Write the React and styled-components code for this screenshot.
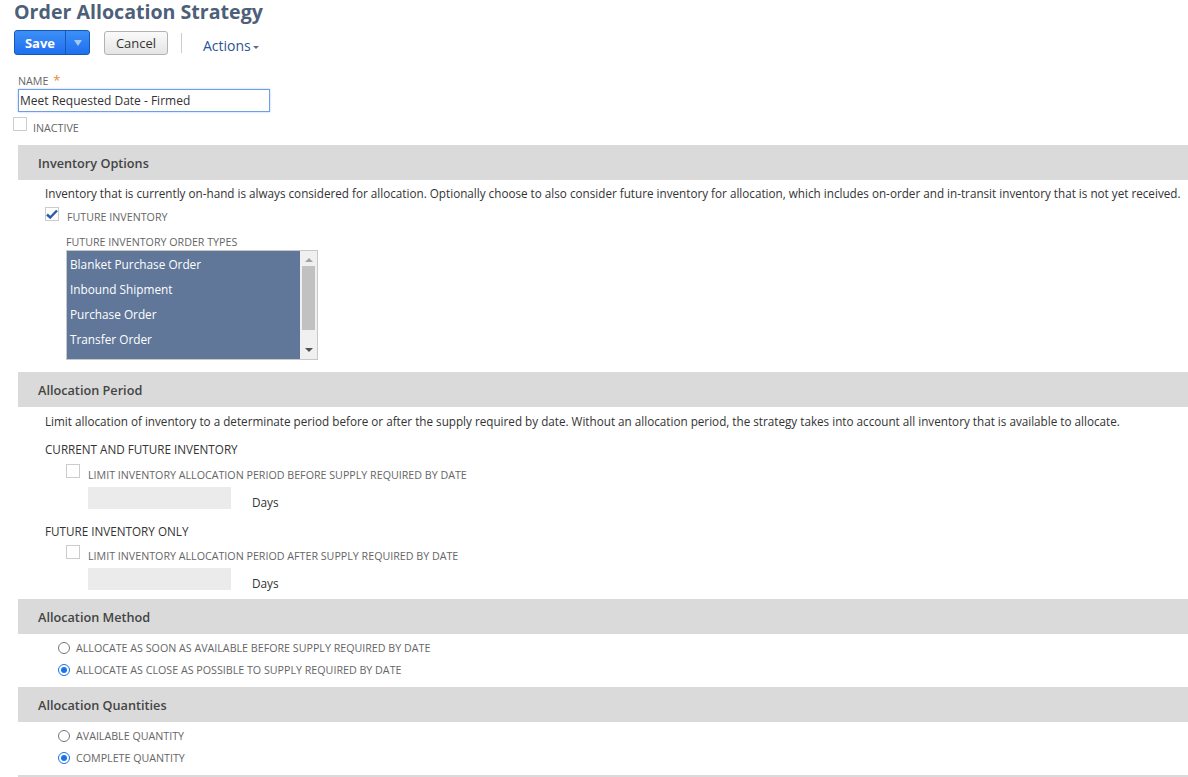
import React from "react"
import styled, { createGlobalStyle } from "styled-components"

const GlobalStyle = createGlobalStyle`
  html, body {
    margin: 0;
    padding: 0;
    background: #fff;
    font-family: "Open Sans", "Liberation Sans", sans-serif;
    color: #333;
  }
`

const Page = styled.div`
  padding: 0 0 0 14px;
  width: 1174px;
  overflow: hidden;
`

const Title = styled.h1`
  margin: 0;
  font-size: 19.6px;
  line-height: 24px;
  font-weight: 700;
  color: #4d5f79;
`

const Toolbar = styled.div`
  display: flex;
  align-items: center;
  margin-top: 6px;
  height: 25px;
`

const SplitButton = styled.div`
  display: flex;
  height: 25px;
  border: 1px solid #125ab2;
  border-radius: 3px;
  overflow: hidden;
  background: linear-gradient(#3d8ff7, #1f6ff0);
  box-sizing: border-box;
`

const SaveLabel = styled.button`
  border: 0;
  background: transparent;
  color: #fff;
  font-family: inherit;
  font-weight: 700;
  font-size: 13px;
  width: 51px;
  padding: 0;
  border-right: 1px solid #1559b8;
`

const Caret = styled.span`
  width: 23px;
  display: flex;
  align-items: center;
  justify-content: center;
`

const CaretShape = styled.span`
  width: 0;
  height: 0;
  border-left: 4px solid transparent;
  border-right: 4px solid transparent;
  border-top: 6px solid #a9c6f3;
`

const CancelButton = styled.button`
  margin-left: 14px;
  height: 24px;
  width: 64px;
  border: 1px solid #b2b2b2;
  border-radius: 3px;
  background: linear-gradient(#fafafa, #e5e5e5);
  font-family: inherit;
  font-size: 13px;
  color: #333;
  padding: 0;
`

const Divider = styled.span`
  width: 1px;
  height: 20px;
  background: #ccc;
  margin: 0 21px 0 13px;
`

const Actions = styled.span`
  color: #2b5594;
  font-size: 14px;
  margin-top: 6px;
  display: flex;
  align-items: center;
  gap: 2px;
`

const SmallCaret = styled.span`
  width: 0;
  height: 0;
  border-left: 3px solid transparent;
  border-right: 3px solid transparent;
  border-top: 3px solid #5a6f8f;
  margin-top: 3px;
`

const NameField = styled.div`
  margin: 18px 0 0 4px;
`

const FieldLabel = styled.div`
  font-size: 10.7px;
  color: #666;
  line-height: 14px;
  text-transform: uppercase;
`

const Required = styled.span`
  color: #e88a2e;
  margin-left: 5px;
  font-size: 13px;
`

const TextInput = styled.input`
  display: block;
  width: 252px;
  height: 23px;
  box-sizing: border-box;
  border: 1px solid #6d9ee8;
  box-shadow: 0 0 2px #a7c6f2;
  font-family: inherit;
  font-size: 12px;
  color: #333;
  padding: 0 1px;
  margin-top: 1px;
  outline: none;
`

const CheckRow = styled.label`
  display: flex;
  align-items: flex-start;
  gap: ${p => p.$gap || 8}px;
  margin: ${p => p.$margin || "0"};
  font-size: 10.7px;
  color: #666;
  line-height: 14px;
  text-transform: uppercase;
`

const Box = styled.span`
  width: 14px;
  height: 14px;
  box-sizing: border-box;
  border: 1px solid #ccc;
  background: #fff;
  display: flex;
  align-items: center;
  justify-content: center;
  flex-shrink: 0;
`

const BoxLabel = styled.span`
  padding-top: ${p => p.$pt || 4}px;
`

const Section = styled.section`
  margin-left: 4px;
  margin-top: ${p => p.$mt || 0}px;
`

const SectionHeader = styled.div`
  background: #dadada;
  height: 35px;
  display: flex;
  align-items: center;
  padding-left: 20px;
  font-size: 12.7px;
  font-weight: 600;
  color: #444;
`

const SectionBody = styled.div`
  padding: ${p => p.$pt ?? 5}px 0 0 27px;
`

const Description = styled.p`
  margin: 0;
  font-size: 11.7px;
  line-height: 16px;
  color: #333;
  white-space: nowrap;
`

const SubHeading = styled.div`
  font-size: 11.7px;
  color: #333;
  text-transform: uppercase;
  line-height: 16px;
  margin-top: ${p => p.$mt || 0}px;
`

const Indent = styled.div`
  margin-left: 21px;
`

const ListLabel = styled(FieldLabel)`
  margin-top: 11px;
`

const ListBox = styled.div`
  display: flex;
  width: 252px;
  height: 110px;
  box-sizing: border-box;
  border: 1px solid #c8c8c8;
  margin-top: 1px;
`

const ListItems = styled.ul`
  list-style: none;
  margin: 0;
  padding: 1px 0 0 0;
  flex: 1;
  background: #607799;
`

const ListItem = styled.li`
  color: #fff;
  font-size: 11.8px;
  height: 25px;
  line-height: 25px;
  padding-left: 3px;
`

const Scrollbar = styled.div`
  width: 17px;
  background: #f0f0f0;
  display: flex;
  flex-direction: column;
  align-items: center;
`

const ScrollArrow = styled.span`
  width: 0;
  height: 0;
  border-left: 4px solid transparent;
  border-right: 4px solid transparent;
  ${p => p.$up
    ? "border-bottom: 4px solid #a3a3a3; margin: 7px 0 4px;"
    : "border-top: 4px solid #505050; margin: auto 0 7px;"}
`

const Thumb = styled.span`
  width: 13px;
  height: 64px;
  background: #c1c1c1;
`

const DaysRow = styled.div`
  display: flex;
  align-items: flex-end;
  gap: 21px;
  margin: 5px 0 0 22px;
  font-size: 11.8px;
  color: #333;
`

const DaysInput = styled.div`
  width: 143px;
  height: 22px;
  background: #ebebeb;
`

const DaysText = styled.span`
  line-height: 16px;
  margin-bottom: -1px;
`

const RadioRow = styled.label`
  display: flex;
  align-items: center;
  gap: 6px;
  margin: ${p => (p.$first ? "1px" : "6px")} 0 0 13px;
  font-size: 10.7px;
  color: #666;
  line-height: 16px;
  text-transform: uppercase;
`

const Radio = styled.span`
  width: 12px;
  height: 12px;
  box-sizing: border-box;
  border-radius: 50%;
  border: 1px solid ${p => (p.$on ? "#1a73e8" : "#767676")};
  display: flex;
  align-items: center;
  justify-content: center;
  background: #fff;

  &::after {
    content: "";
    width: 6px;
    height: 6px;
    border-radius: 50%;
    background: ${p => (p.$on ? "#1a73e8" : "transparent")};
  }
`

const BottomRule = styled.div`
  height: 2px;
  background: #dadada;
  margin-top: 9px;
`

const Check = () => (
  <svg width="12" height="10" viewBox="0 0 12 10">
    <path d="M1 5.5 L4.2 8.5 L11 1.5" fill="none" stroke="#2b5aa8" strokeWidth="2.4" />
  </svg>
)

const orderTypes = ["Blanket Purchase Order", "Inbound Shipment", "Purchase Order", "Transfer Order"]

export default function App() {
  return (
    <Page>
      <GlobalStyle />
      <Title>Order Allocation Strategy</Title>
      <Toolbar>
        <SplitButton>
          <SaveLabel>Save</SaveLabel>
          <Caret>
            <CaretShape />
          </Caret>
        </SplitButton>
        <CancelButton>Cancel</CancelButton>
        <Divider />
        <Actions>
          Actions <SmallCaret />
        </Actions>
      </Toolbar>

      <NameField>
        <FieldLabel>
          Name<Required>*</Required>
        </FieldLabel>
        <TextInput defaultValue="Meet Requested Date - Firmed" />
      </NameField>
      <CheckRow $gap={6} $margin="5px 0 0 -1px">
        <Box />
        <BoxLabel $pt={4}>Inactive</BoxLabel>
      </CheckRow>

      <Section $mt={10}>
        <SectionHeader>Inventory Options</SectionHeader>
        <SectionBody>
          <Description>
            Inventory that is currently on-hand is always considered for allocation. Optionally choose to also consider future inventory for allocation, which includes on-order and in-transit inventory that is not yet received.
          </Description>
          <CheckRow $margin="6px 0 0 0">
            <Box>
              <Check />
            </Box>
            <BoxLabel $pt={3}>Future Inventory</BoxLabel>
          </CheckRow>
          <Indent>
            <ListLabel>Future Inventory Order Types</ListLabel>
            <ListBox>
              <ListItems>
                {orderTypes.map(t => (
                  <ListItem key={t}>{t}</ListItem>
                ))}
              </ListItems>
              <Scrollbar>
                <ScrollArrow $up />
                <Thumb />
                <ScrollArrow />
              </Scrollbar>
            </ListBox>
          </Indent>
        </SectionBody>
      </Section>

      <Section $mt={12}>
        <SectionHeader>Allocation Period</SectionHeader>
        <SectionBody $pt={6}>
          <Description>
            Limit allocation of inventory to a determinate period before or after the supply required by date. Without an allocation period, the strategy takes into account all inventory that is available to allocate.
          </Description>
          <SubHeading $mt={12}>Current and Future Inventory</SubHeading>
          <Indent>
            <CheckRow $margin="7px 0 0 0">
              <Box />
              <BoxLabel $pt={4}>Limit Inventory Allocation Period Before Supply Required By Date</BoxLabel>
            </CheckRow>
            <DaysRow>
              <DaysInput />
              <DaysText>Days</DaysText>
            </DaysRow>
          </Indent>
          <SubHeading $mt={14}>Future Inventory Only</SubHeading>
          <Indent>
            <CheckRow $margin="6px 0 0 0">
              <Box />
              <BoxLabel $pt={4}>Limit Inventory Allocation Period After Supply Required By Date</BoxLabel>
            </CheckRow>
            <DaysRow>
              <DaysInput />
              <DaysText>Days</DaysText>
            </DaysRow>
          </Indent>
        </SectionBody>
      </Section>

      <Section $mt={9}>
        <SectionHeader>Allocation Method</SectionHeader>
        <SectionBody>
          <RadioRow $first>
            <Radio />
            Allocate as soon as available before supply required by date
          </RadioRow>
          <RadioRow>
            <Radio $on />
            Allocate as close as possible to supply required by date
          </RadioRow>
        </SectionBody>
      </Section>

      <Section $mt={9}>
        <SectionHeader>Allocation Quantities</SectionHeader>
        <SectionBody>
          <RadioRow $first>
            <Radio />
            Available Quantity
          </RadioRow>
          <RadioRow>
            <Radio $on />
            Complete Quantity
          </RadioRow>
        </SectionBody>
        <BottomRule />
      </Section>
    </Page>
  )
}
